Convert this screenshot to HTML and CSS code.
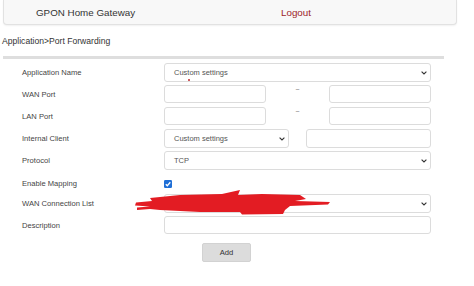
FILE: index.html
```html
<!DOCTYPE html>
<html>
<head>
<meta charset="utf-8">
<link rel="stylesheet" href="styles.css">
</head>
<body>
<div class="top">
  <span class="brand">GPON Home Gateway</span>
  <span class="logout">Logout</span>
</div>
<div class="crumb">Application&gt;Port Forwarding</div>
<div class="sep"></div>
<div class="form">
  <div class="row">
    <div class="label">Application Name</div>
    <div class="select full"><span>Custom settings</span><svg class="chev" width="6" height="4" viewBox="0 0 6 4"><path d="M0.6 0.6 L3 3 L5.4 0.6" fill="none" stroke="#333" stroke-width="1.1"/></svg></div>
  </div>
  <div class="row short">
    <div class="label">WAN Port</div>
    <div class="input half"></div>
    <div class="tilde">~</div>
    <div class="input half"></div>
  </div>
  <div class="row short">
    <div class="label">LAN Port</div>
    <div class="input half"></div>
    <div class="tilde">~</div>
    <div class="input half"></div>
  </div>
  <div class="row">
    <div class="label">Internal Client</div>
    <div class="select mid"><span>Custom settings</span><svg class="chev" width="6" height="4" viewBox="0 0 6 4"><path d="M0.6 0.6 L3 3 L5.4 0.6" fill="none" stroke="#333" stroke-width="1.1"/></svg></div>
    <div class="input mid gap"></div>
  </div>
  <div class="row">
    <div class="label">Protocol</div>
    <div class="select full"><span>TCP</span><svg class="chev" width="6" height="4" viewBox="0 0 6 4"><path d="M0.6 0.6 L3 3 L5.4 0.6" fill="none" stroke="#333" stroke-width="1.1"/></svg></div>
  </div>
  <div class="row check">
    <div class="label">Enable Mapping</div>
    <svg class="box" width="8" height="8" viewBox="0 0 8 8"><rect x="0" y="0" width="8" height="8" rx="1.2" fill="#1f6fd6"/><path d="M1.8 4.2 L3.3 5.7 L6.3 2.3" fill="none" stroke="#fff" stroke-width="1.3"/></svg>
  </div>
  <div class="row">
    <div class="label">WAN Connection List</div>
    <div class="select full"><span></span><svg class="chev" width="6" height="4" viewBox="0 0 6 4"><path d="M0.6 0.6 L3 3 L5.4 0.6" fill="none" stroke="#333" stroke-width="1.1"/></svg></div>
  </div>
  <div class="row short">
    <div class="label">Description</div>
    <div class="input full"></div>
  </div>
  <div class="actions"><div class="btn">Add</div></div>
</div>
<svg class="scribble" width="474" height="286" viewBox="0 0 474 286">
  <path d="M150,198 L180,195 L222,194 L240,190 L238,195 L262,194 L300,195 L306,199 L295,201 L330,202 L328,204.5 L290,206 L285,210 L283,214 L242,214.5 L240,212 L200,212 L160,210 L150,209 L137,210 L137,207.5 L150,206.5 L135,205.5 L136,202.5 L152,201 Z" fill="#e31c23"/>
  <circle cx="189" cy="80" r="1" fill="#c0262b"/>
</svg>
</body>
</html>
```
FILE: styles.css
```css
html, body {
  margin: 0;
  padding: 0;
  background: #fff;
  font-family: "Liberation Sans", Arial, sans-serif;
  color: #333;
}
body {
  width: 474px;
  height: 286px;
  overflow: hidden;
  position: relative;
}
.top {
  margin-left: 3px;
  width: 452px;
  height: 24px;
  background: #f8f8f8;
  border: 1px solid #e2e2e2;
  border-top: none;
  border-radius: 0 0 4px 4px;
  box-shadow: 0 1px 2px rgba(0,0,0,0.06);
  display: flex;
  align-items: center;
  font-size: 9.8px;
}
.brand {
  padding-left: 32px;
  width: 245px;
  color: #333;
}
.logout {
  color: #9c2428;
}
.crumb {
  margin-top: 11px;
  margin-left: 2px;
  font-size: 8.6px;
  line-height: 11px;
  color: #333;
}
.sep {
  margin-top: 9px;
  margin-left: 3px;
  width: 441px;
  height: 3px;
  background: #dedede;
}
.form {
  margin-top: 4px;
}
.row {
  display: flex;
  align-items: center;
  height: 19px;
  margin-bottom: 3px;
}
.row.short {
  height: 18px;
  margin-bottom: 4px;
}
.row.check {
  height: 21px;
  margin-bottom: 0;
}
.label {
  flex: none;
  width: 164px;
  padding-left: 22px;
  box-sizing: border-box;
  font-size: 7.6px;
  color: #444;
}
.select, .input {
  flex: none;
  box-sizing: border-box;
  height: 100%;
  border: 1px solid #dcdcdc;
  border-radius: 3px;
  background: #fff;
}
.select {
  display: flex;
  align-items: center;
  justify-content: space-between;
  padding: 0 3px 0 9px;
  font-size: 7.5px;
  color: #555;
}
.full { width: 267px; }
.half { width: 102px; }
.mid { width: 125px; }
.gap { margin-left: 17px; }
.tilde {
  flex: none;
  width: 63px;
  text-align: center;
  font-size: 7px;
  color: #777;
  align-self: flex-start;
  margin-top: 1px;
}
.box {
  display: block;
  margin-top: 1px;
}
.actions {
  padding-top: 5px;
  padding-left: 202px;
}
.btn {
  width: 49px;
  height: 19px;
  box-sizing: border-box;
  background: #dcdcdc;
  border: 1px solid #d2d2d2;
  border-radius: 2px;
  font-size: 7.6px;
  color: #333;
  display: flex;
  align-items: center;
  justify-content: center;
}
.scribble {
  position: absolute;
  left: 0;
  top: 0;
  pointer-events: none;
}
```
